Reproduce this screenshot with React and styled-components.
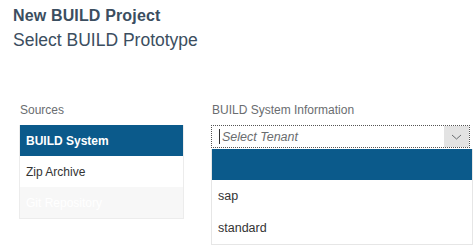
import React from 'react'
import styled, { createGlobalStyle } from 'styled-components'

const Global = createGlobalStyle`
  html, body {
    margin: 0;
    padding: 0;
    background: #ffffff;
    font-family: 'Liberation Sans', Arial, sans-serif;
  }
`

const Page = styled.div`
  width: 474px;
  height: 249px;
  overflow: hidden;
`

const Header = styled.div`
  padding: 6px 0 0 13px;
  color: #3b4e60;
`

const Title = styled.div`
  font-size: 16px;
  font-weight: bold;
  line-height: 20px;
  letter-spacing: 0.15px;
`

const Subtitle = styled.div`
  font-size: 17.5px;
  line-height: 22px;
  margin-top: 3px;
`

const Body = styled.div`
  display: grid;
  grid-template-columns: 165px 265px;
  column-gap: 27px;
  padding: 52px 0 0 19px;
`

const Label = styled.div`
  font-size: 12px;
  color: #6a6d70;
  line-height: 14px;
  padding-left: 1px;
  margin-bottom: 8px;
`

const List = styled.div`
  border: 1px solid #ececec;
  border-top: none;
`

const Item = styled.div`
  height: 31px;
  display: flex;
  align-items: center;
  padding-left: 6px;
  font-size: 12px;
  font-weight: ${p => (p.$selected ? 'bold' : 'normal')};
  color: ${p => (p.$selected || p.$disabled ? '#ffffff' : '#333333')};
  background: ${p => (p.$selected ? '#0b5a8b' : p.$disabled ? '#f7f7f7' : '#ffffff')};
`

const Field = styled.div`
  margin-top: 5px;
  height: 21px;
  border: 1px dotted #555;
  display: flex;
  align-items: stretch;
  background: #fff;
  width: 257px;
`

const Input = styled.div`
  flex: 1;
  display: flex;
  align-items: center;
  font-size: 12.5px;
  font-style: italic;
  color: #6a6d70;
  padding-left: 7px;
`

const Caret = styled.span`
  width: 1px;
  height: 15px;
  background: #333;
  margin-right: 2px;
`

const Arrow = styled.div`
  width: 25px;
  background: #e3e3e3;
  display: flex;
  align-items: center;
  justify-content: center;
`

const Menu = styled.div`
  margin-top: 1px;
  border: 1px solid #e6e6e6;
  border-top: none;
  width: 260px;
`

const Option = styled.div`
  height: ${p => (p.$active ? '31px' : '32px')};
  display: flex;
  align-items: center;
  padding-left: 6px;
  font-size: 12.5px;
  color: #333;
  background: ${p => (p.$active ? '#0b5a8b' : '#ffffff')};
`

export default function App() {
  return (
    <Page>
      <Global />
      <Header>
        <Title>New BUILD Project</Title>
        <Subtitle>Select BUILD Prototype</Subtitle>
      </Header>
      <Body>
        <div>
          <Label>Sources</Label>
          <List>
            <Item $selected>BUILD System</Item>
            <Item>Zip Archive</Item>
            <Item $disabled>Git Repository</Item>
          </List>
        </div>
        <div>
          <Label>BUILD System Information</Label>
          <Field>
            <Input>
              <Caret />
              Select Tenant
            </Input>
            <Arrow>
              <svg width="11" height="6" viewBox="0 0 11 6">
                <path d="M1 1 L5.5 5 L10 1" fill="none" stroke="#6a6d70" strokeWidth="1" />
              </svg>
            </Arrow>
          </Field>
          <Menu>
            <Option $active />
            <Option>sap</Option>
            <Option>standard</Option>
          </Menu>
        </div>
      </Body>
    </Page>
  )
}
